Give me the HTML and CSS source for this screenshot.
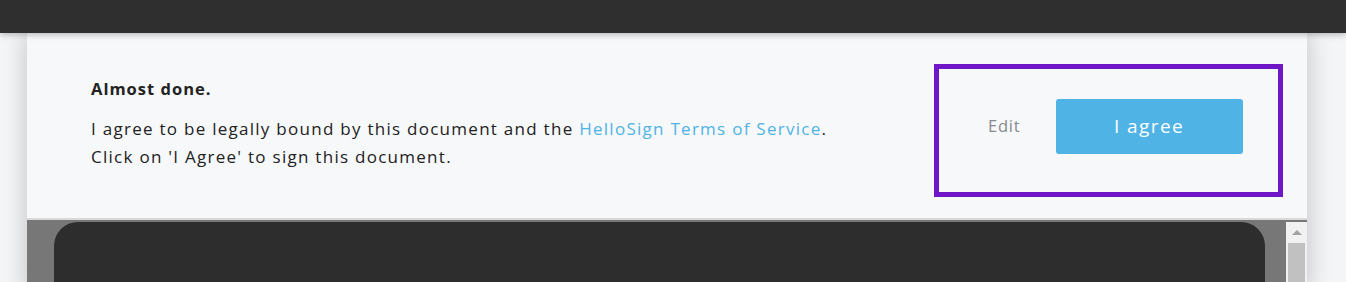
FILE: index.html
```html
<!DOCTYPE html>
<html lang="en">
<head>
<meta charset="utf-8">
<title>HelloSign - Almost done</title>
<link rel="stylesheet" href="styles.css">
</head>
<body>
<header class="topbar"></header>
<main class="page">
  <section class="panel">
    <div class="notice">
      <div class="notice-text">
        <p class="title">Almost done.</p>
        <p class="body">I agree to be legally bound by this document and the <a href="#" class="link">HelloSign Terms of Service</a>.<br>Click on 'I Agree' to sign this document.</p>
      </div>
      <div class="actions">
        <a href="#" class="edit">Edit</a>
        <button class="agree" type="button">I agree</button>
      </div>
    </div>
    <div class="viewer">
      <div class="doc"></div>
      <div class="scrollbar">
        <span class="arrow"></span>
        <span class="thumb"></span>
      </div>
    </div>
  </section>
</main>
</body>
</html>
```
FILE: styles.css
```css
* { box-sizing: border-box; }
html, body { margin: 0; padding: 0; height: 100%; overflow: hidden; }
body {
  background: #f4f5f7;
  font-family: "Open Sans", "Noto Sans", sans-serif;
  color: #222;
}
.topbar {
  height: 33px;
  background: #2f2f2f;
  position: relative;
  z-index: 2;
  box-shadow: 0 2px 6px rgba(0,0,0,0.25);
}
.page {
  display: flex;
  justify-content: flex-start;
  padding-left: 27px;
}
.panel {
  width: 1280px;
  background: #f7f8fa;
  box-shadow: 0 0 24px rgba(0,0,0,0.22);
  display: flex;
  flex-direction: column;
  height: 260px;
}
.notice {
  height: 187px;
  display: flex;
  justify-content: space-between;
  align-items: flex-start;
  padding: 0 24px 0 64px;
  border-bottom: 2px solid #d9d9d9;
}
.notice-text { padding-top: 44px; }
.title {
  margin: 0 0 14px;
  font-weight: 700;
  font-size: 16.5px;
  line-height: 24px;
  letter-spacing: 1px;
  color: #222;
}
.body {
  margin: 0;
  font-size: 17px;
  line-height: 28px;
  letter-spacing: 1.27px;
  color: #222;
}
.link { color: #4fb3e6; text-decoration: none; }
.actions {
  margin-top: 31px;
  width: 349px;
  height: 133px;
  border: 5px solid #6f17c7;
  display: flex;
  align-items: center;
  padding: 0 34px 9px 49px;
  gap: 35px;
}
.edit {
  color: #888a8c;
  font-size: 16.5px;
  text-decoration: none;
  letter-spacing: 0.8px;
  margin-bottom: 2px;
}
.agree {
  width: 187px;
  height: 55px;
  background: #4fb3e6;
  border: none;
  border-radius: 3px;
  color: #fff;
  font-family: "Open Sans", "Noto Sans", sans-serif;
  font-size: 19px;
  letter-spacing: 1.4px;
  padding: 0;
}
.viewer {
  flex: 1;
  background: #777777;
  display: flex;
  padding: 2px 0 0 27px;
}
.doc {
  flex: 1;
  margin-right: 21px;
  background: #2d2d2d;
  border-radius: 24px 24px 0 0;
}
.scrollbar {
  width: 21px;
  background: #f1f1f1;
  display: flex;
  flex-direction: column;
  align-items: center;
  padding-top: 8px;
}
.arrow {
  width: 0;
  height: 0;
  border-left: 5px solid transparent;
  border-right: 5px solid transparent;
  border-bottom: 5px solid #a3a3a3;
}
.thumb {
  margin-top: 8px;
  width: 17px;
  flex: 1;
  background: #c1c1c1;
}
```
